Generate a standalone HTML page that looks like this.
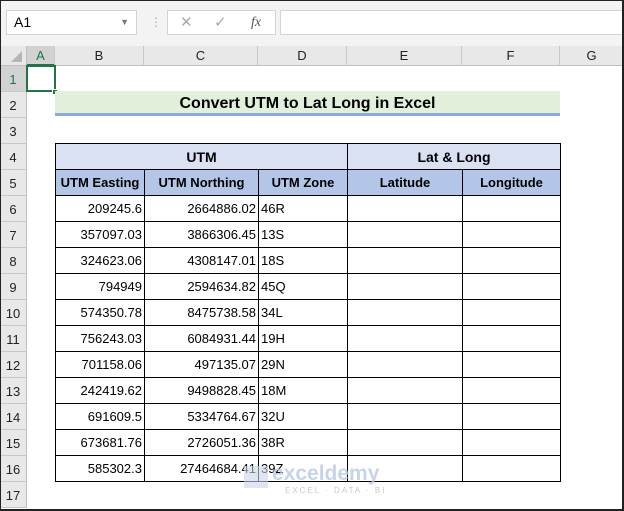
<!DOCTYPE html><html><head><style>
*{margin:0;padding:0;box-sizing:border-box}
body{width:624px;height:511px;overflow:hidden;background:#fff;font-family:"Liberation Sans",Calibri,sans-serif;position:relative}
.abs{position:absolute}
.tb{left:0;top:0;width:624px;height:46px;background:#f3f3f3;border-top:1px solid #222;border-left:1px solid #222}
.box{background:#fff;border:1px solid #d4d4d4}
.ch{top:46px;height:20px;background:#e8e8e8;border-right:1px solid #c8c8c8;border-bottom:1px solid #bfbfbf;font-size:13px;text-align:center;line-height:20px;color:#222}
.rh{left:0;width:27px;height:26px;background:#e8e8e8;border-bottom:1px solid #c8c8c8;border-right:1px solid #bfbfbf;font-size:13px;text-align:center;line-height:28px;color:#222}
table{position:absolute;left:55px;top:143px;border-collapse:collapse;font-family:"Liberation Sans",Calibri,sans-serif;font-size:13px}
td{border:1px solid #000;height:26px;padding:0 2px;white-space:nowrap}
.h1{background:#d9e1f2;font-weight:bold;text-align:center;font-size:14px}
.h2{background:#b4c6e7;font-weight:bold;text-align:center}
.r{text-align:right}
</style></head><body>
<div class="abs tb"></div>
<div class="abs box" style="left:6px;top:10px;width:131px;height:25px;font-size:14px;line-height:23px;padding-left:7px">A1<span style="position:absolute;right:7px;top:0;font-size:9px;color:#777">▼</span></div>
<div class="abs" style="left:150px;top:15px;color:#aaa;font-size:12px">⋮</div>
<div class="abs box" style="left:167px;top:10px;width:109px;height:25px;color:#aaa;font-size:15px;line-height:23px"><span style="position:absolute;left:12px">✕</span><span style="position:absolute;left:46px">✓</span><span style="position:absolute;left:83px;font-family:'Liberation Serif',serif;font-style:italic;color:#555;font-size:14px">fx</span></div>
<div class="abs box" style="left:280px;top:10px;width:344px;height:25px"></div>
<div class="abs" style="left:0;top:46px;width:27px;height:20px;background:#e8e8e8;border-right:1px solid #bfbfbf;border-bottom:1px solid #bfbfbf"><div style="position:absolute;right:4px;bottom:3px;width:0;height:0;border-left:11px solid transparent;border-bottom:11px solid #b5b5b5"></div></div>
<div class="abs ch" style="left:27px;width:28px;background:#d2d2d2;border-bottom:2px solid #217346;color:#217346">A</div>
<div class="abs ch" style="left:55px;width:89px">B</div>
<div class="abs ch" style="left:144px;width:114px">C</div>
<div class="abs ch" style="left:258px;width:89px">D</div>
<div class="abs ch" style="left:347px;width:115px">E</div>
<div class="abs ch" style="left:462px;width:98px">F</div>
<div class="abs ch" style="left:560px;width:64px">G</div>
<div class="abs rh" style="top:66px;background:#d2d2d2;color:#217346">1</div>
<div class="abs rh" style="top:92px">2</div><div class="abs rh" style="top:118px">3</div><div class="abs rh" style="top:144px">4</div><div class="abs rh" style="top:170px">5</div><div class="abs rh" style="top:196px">6</div><div class="abs rh" style="top:222px">7</div><div class="abs rh" style="top:248px">8</div><div class="abs rh" style="top:274px">9</div><div class="abs rh" style="top:300px">10</div><div class="abs rh" style="top:326px">11</div><div class="abs rh" style="top:352px">12</div><div class="abs rh" style="top:378px">13</div><div class="abs rh" style="top:404px">14</div><div class="abs rh" style="top:430px">15</div><div class="abs rh" style="top:456px">16</div><div class="abs rh" style="top:482px">17</div>
<div class="abs" style="left:26px;top:65px;width:30px;height:27px;border:2px solid #217346"></div>
<div class="abs" style="left:52px;top:89px;width:6px;height:6px;background:#217346;border:1px solid #fff"></div>
<div class="abs" style="left:55px;top:91px;width:505px;height:25px;background:#e2efda;text-align:center;font-weight:bold;font-size:16px;line-height:26px;border-bottom:3px solid #8ea9db">Convert UTM to Lat Long in Excel</div>
<table>
<colgroup><col style="width:89px"><col style="width:114px"><col style="width:89px"><col style="width:115px"><col style="width:98px"></colgroup>
<tr><td class="h1" colspan="3">UTM</td><td class="h1" colspan="2">Lat &amp; Long</td></tr>
<tr><td class="h2">UTM Easting</td><td class="h2">UTM Northing</td><td class="h2">UTM Zone</td><td class="h2">Latitude</td><td class="h2">Longitude</td></tr>
<tr><td class="r">209245.6</td><td class="r">2664886.02</td><td>46R</td><td></td><td></td></tr>
<tr><td class="r">357097.03</td><td class="r">3866306.45</td><td>13S</td><td></td><td></td></tr>
<tr><td class="r">324623.06</td><td class="r">4308147.01</td><td>18S</td><td></td><td></td></tr>
<tr><td class="r">794949</td><td class="r">2594634.82</td><td>45Q</td><td></td><td></td></tr>
<tr><td class="r">574350.78</td><td class="r">8475738.58</td><td>34L</td><td></td><td></td></tr>
<tr><td class="r">756243.03</td><td class="r">6084931.44</td><td>19H</td><td></td><td></td></tr>
<tr><td class="r">701158.06</td><td class="r">497135.07</td><td>29N</td><td></td><td></td></tr>
<tr><td class="r">242419.62</td><td class="r">9498828.45</td><td>18M</td><td></td><td></td></tr>
<tr><td class="r">691609.5</td><td class="r">5334764.67</td><td>32U</td><td></td><td></td></tr>
<tr><td class="r">673681.76</td><td class="r">2726051.36</td><td>38R</td><td></td><td></td></tr>
<tr><td class="r">585302.3</td><td class="r">27464684.41</td><td>39Z</td><td></td><td></td></tr>
</table>
<div class="abs" style="left:244px;top:466px;width:24px;height:22px;background:#c9d6ea;opacity:.6"></div>
<div class="abs" style="left:272px;top:462px;font-size:21px;font-weight:bold;color:#b9c9e6;opacity:.8">exceldemy</div>
<div class="abs" style="left:285px;top:486px;font-size:8px;letter-spacing:2px;color:#c8c8c8">EXCEL · DATA · BI</div>
<div class="abs" style="left:0;top:0;width:624px;height:511px;border-right:2px solid #222;border-bottom:2px solid #222;border-left:1px solid #222;border-top:1px solid #222"></div>
</body></html>
